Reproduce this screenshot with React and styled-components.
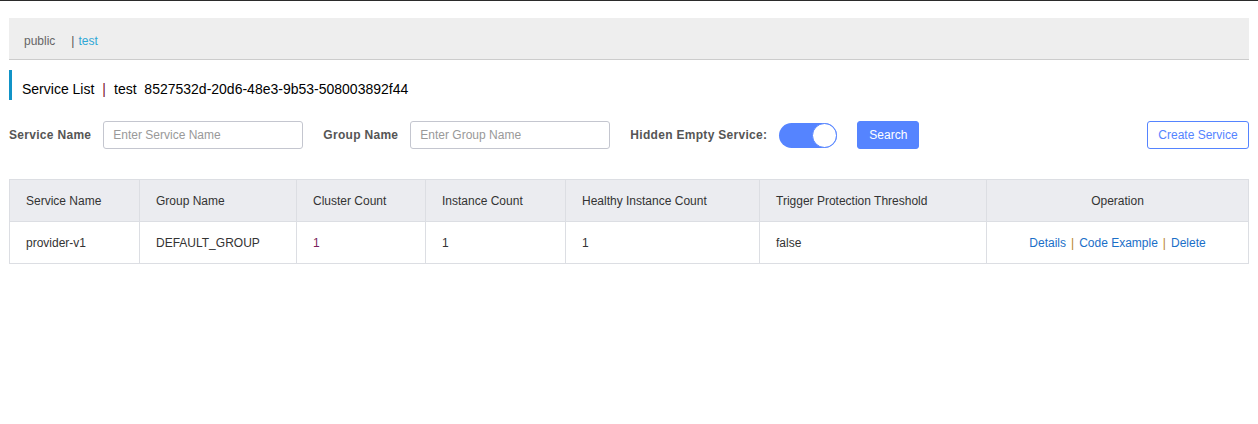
import React from 'react'
import styled, { createGlobalStyle } from 'styled-components'

const Global = createGlobalStyle`
  body {
    margin: 0;
    font-family: "Liberation Sans", Arial, sans-serif;
    font-size: 12px;
    color: #333;
    background: #fff;
  }
`

const Page = styled.div`
  border-top: 1px solid #2b2b2b;
  padding: 17px 9px 0;
`

const NamespaceBar = styled.div`
  box-sizing: border-box;
  height: 42px;
  background: #eeeeee;
  border-bottom: 1px solid #cccccc;
  display: flex;
  align-items: center;
  padding: 4px 0 0 15px;
  font-size: 12px;
`

const Ns = styled.span`
  color: ${p => (p.active ? '#2fa7d6' : '#666')};
`

const NsSep = styled.span`
  color: #555;
  margin: 0 4px 0 16px;
`

const Title = styled.div`
  box-sizing: border-box;
  margin-top: 10px;
  height: 30px;
  border-left: 3px solid #1193c7;
  padding: 7px 0 0 10px;
  display: flex;
  align-items: center;
  font-size: 14px;
  color: #000;
  white-space: pre;
`

const TitleSep = styled.span`
  color: #7a1430;
  margin: 0 8px;
`

const Form = styled.div`
  margin-top: 21px;
  display: flex;
  align-items: center;
  height: 28px;
`

const Label = styled.span`
  font-weight: bold;
  color: #555;
  letter-spacing: 0.3px;
  margin-right: 12px;
`

const Input = styled.input`
  box-sizing: border-box;
  width: 200px;
  height: 28px;
  border: 1px solid #c4c6cf;
  border-radius: 3px;
  padding: 0 9px;
  font-family: inherit;
  font-size: 12px;
  margin-right: 20px;
  outline: none;
  &::placeholder {
    color: #999;
  }
`

const Switch = styled.div`
  box-sizing: border-box;
  width: 58px;
  height: 25px;
  border-radius: 13px;
  background: #5584ff;
  display: flex;
  justify-content: flex-end;
  align-items: center;
  margin-right: 20px;
`

const Knob = styled.div`
  box-sizing: border-box;
  width: 25px;
  height: 25px;
  border-radius: 50%;
  background: #fff;
  border: 1px solid #5584ff;
`

const Button = styled.button`
  box-sizing: border-box;
  width: ${p => p.w}px;
  height: 28px;
  padding: 0;
  border-radius: 3px;
  font-family: inherit;
  font-size: 12px;
  cursor: pointer;
  border: 1px solid #5584ff;
  background: ${p => (p.primary ? '#5584ff' : '#fff')};
  color: ${p => (p.primary ? '#fff' : '#5584ff')};
  margin-left: ${p => (p.right ? 'auto' : '0')};
`

const Table = styled.div`
  margin-top: 30px;
  display: grid;
  grid-template-columns: 130px 157px 129px 140px 194px 227px 1fr;
  border: 1px solid #dcdee3;
  border-right: none;
  border-bottom: none;
`

const Cell = styled.div`
  box-sizing: border-box;
  height: 42px;
  display: flex;
  align-items: center;
  justify-content: ${p => (p.center ? 'center' : 'flex-start')};
  padding-left: ${p => (p.center ? 0 : 16)}px;
  background: ${p => (p.head ? '#ebecf0' : '#fff')};
  border-right: 1px solid #dcdee3;
  border-bottom: 1px solid #dcdee3;
  color: ${p => p.color || '#333'};
`

const Link = styled.a`
  color: #1a6fc8;
  text-decoration: none;
`

const LinkSep = styled.span`
  color: #b8862a;
  margin: 0 5px;
`

const headers = [
  'Service Name',
  'Group Name',
  'Cluster Count',
  'Instance Count',
  'Healthy Instance Count',
  'Trigger Protection Threshold',
]

export default function App() {
  return (
    <Page>
      <Global />
      <NamespaceBar>
        <Ns>public</Ns>
        <NsSep>|</NsSep>
        <Ns active>test</Ns>
      </NamespaceBar>
      <Title>
        Service List<TitleSep>|</TitleSep>test  8527532d-20d6-48e3-9b53-508003892f44
      </Title>
      <Form>
        <Label>Service Name</Label>
        <Input placeholder="Enter Service Name" />
        <Label>Group Name</Label>
        <Input placeholder="Enter Group Name" />
        <Label>Hidden Empty Service:</Label>
        <Switch>
          <Knob />
        </Switch>
        <Button primary w={62}>Search</Button>
        <Button right w={102}>Create Service</Button>
      </Form>
      <Table>
        {headers.map(h => (
          <Cell head key={h}>{h}</Cell>
        ))}
        <Cell head center>Operation</Cell>
        <Cell>provider-v1</Cell>
        <Cell>DEFAULT_GROUP</Cell>
        <Cell color="#7a1f5c">1</Cell>
        <Cell>1</Cell>
        <Cell>1</Cell>
        <Cell>false</Cell>
        <Cell center>
          <Link href="#">Details</Link>
          <LinkSep>|</LinkSep>
          <Link href="#">Code Example</Link>
          <LinkSep>|</LinkSep>
          <Link href="#">Delete</Link>
        </Cell>
      </Table>
    </Page>
  )
}
